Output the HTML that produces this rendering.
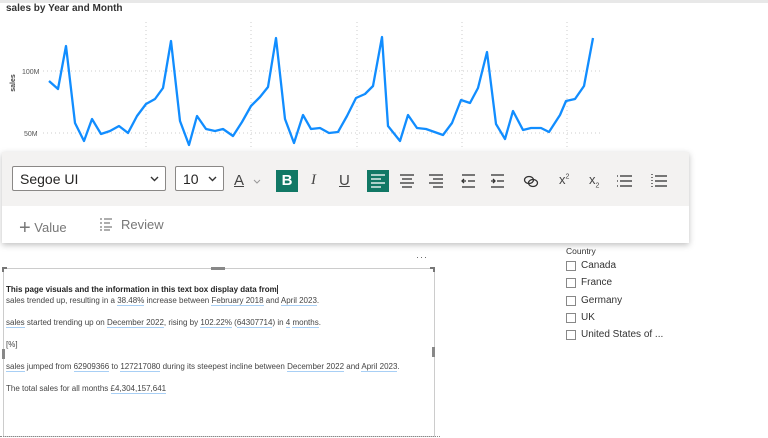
<!DOCTYPE html>
<html><head><meta charset="utf-8"><style>
*{margin:0;padding:0;box-sizing:border-box}
body{width:768px;height:438px;background:#fff;position:relative;overflow:hidden;font-family:"Liberation Sans",sans-serif;color:#252423}
.abs{position:absolute}
.u{border-bottom:1px solid #a8cff5}
.tb{font-size:8px;line-height:11px;color:#444}
.ic{position:absolute;top:172px;font-size:15px;color:#444}
.cb{position:absolute;left:566px;width:10px;height:10px;border:1px solid #888;background:#fff}
.cl{position:absolute;left:581px;font-size:10px;color:#333}
</style></head><body>
<div class="abs" style="left:0;top:0;width:768px;height:3px;background:#e8e8e8"></div>
<div class="abs" style="left:6px;top:3px;font-size:10px;font-weight:bold;color:#333">sales by Year and Month</div>
<svg class="abs" style="left:0;top:0" width="768" height="160">
<g stroke="#ccc" stroke-dasharray="1,3" stroke-width="1">
<line x1="43" y1="71" x2="600" y2="71"/><line x1="43" y1="133" x2="600" y2="133"/>
<line x1="146" y1="22" x2="146" y2="150"/><line x1="251" y1="22" x2="251" y2="150"/><line x1="357" y1="22" x2="357" y2="150"/><line x1="462" y1="22" x2="462" y2="150"/><line x1="567" y1="22" x2="567" y2="150"/>
</g>
<text x="22" y="74" font-size="7" fill="#555" font-family="Liberation Sans">100M</text>
<text x="24" y="136" font-size="7" fill="#555" font-family="Liberation Sans">50M</text>
<text x="15" y="83" font-size="7" font-weight="bold" fill="#444" font-family="Liberation Sans" transform="rotate(-90 15 83)" text-anchor="middle">sales</text>
<polyline fill="none" stroke="#118dff" stroke-width="2.3" stroke-linejoin="round" points="49,81 58,89 66,46 75,123 84,141 92,119 101,134 110,131 119,126 128,133 137,116 146,104 155,99 163,88 171,41 180,121 189,145 197,116 206,129 215,131 223,129 233,136 242,122 251,106 260,97 268,87 276,38 285,119 294,143 303,115 311,129 320,128 329,133 338,132 347,116 356,98 365,94 373,86 382,37 388,126 400,141 408,115 417,128 426,129 443,135 452,123 461,100 470,103 478,88 487,52 496,124 505,139 513,111 523,130 531,128 541,128 549,132 560,115 566,101 575,99 584,86 593,38"/>
</svg>
<div class="abs" style="left:2px;top:152px;width:687px;height:91px;background:#fff;box-shadow:0 2px 6px rgba(0,0,0,.25)">
<div style="height:54px;background:#f3f2f1"></div>
</div>
<div class="abs" style="left:12px;top:166px;width:154px;height:25px;border:1px solid #8a8886;background:#fff;border-radius:2px;font-size:14px;padding:4px 7px">Segoe UI<svg style="position:absolute;right:6px;top:9px" width="9" height="6"><path d="M1 1l3.5 3.5L8 1" fill="none" stroke="#333" stroke-width="1.4"/></svg></div>
<div class="abs" style="left:175px;top:166px;width:49px;height:25px;border:1px solid #8a8886;background:#fff;border-radius:2px;font-size:14px;padding:4px 7px">10<svg style="position:absolute;right:6px;top:9px" width="9" height="6"><path d="M1 1l3.5 3.5L8 1" fill="none" stroke="#333" stroke-width="1.4"/></svg></div>
<div class="ic" style="left:234px;text-decoration:underline">A</div><svg class="abs" style="left:253px;top:179px" width="8" height="5"><path d="M1 1l3 3 3-3" fill="none" stroke="#999" stroke-width="1"/></svg>
<div class="abs" style="left:276px;top:170px;width:22px;height:22px;background:#117865;color:#fff;font-weight:bold;font-size:15px;text-align:center;line-height:22px">B</div>
<div class="ic" style="left:311px;font-style:italic;font-family:'Liberation Serif',serif">I</div>
<div class="ic" style="left:339px;text-decoration:underline">U</div>
<svg class="abs" style="left:367px;top:170px" width="320" height="22" stroke="#333" stroke-width="1.3" fill="none">
<rect x="0" y="0" width="22" height="22" fill="#117865" stroke="none"/>
<g stroke="#fff"><line x1="4" y1="5" x2="18" y2="5"/><line x1="4" y1="9" x2="14" y2="9"/><line x1="4" y1="13" x2="18" y2="13"/><line x1="4" y1="17" x2="14" y2="17"/></g>
<line x1="33" y1="5" x2="47" y2="5"/><line x1="35" y1="9" x2="45" y2="9"/><line x1="33" y1="13" x2="47" y2="13"/><line x1="35" y1="17" x2="45" y2="17"/>
<line x1="62" y1="5" x2="76" y2="5"/><line x1="66" y1="9" x2="76" y2="9"/><line x1="62" y1="13" x2="76" y2="13"/><line x1="66" y1="17" x2="76" y2="17"/>
<line x1="95" y1="5" x2="108" y2="5"/><line x1="101" y1="11" x2="108" y2="11"/><line x1="95" y1="17" x2="108" y2="17"/><path d="M99 11h-4m2-2l-2 2 2 2"/>
<line x1="124" y1="5" x2="137" y2="5"/><line x1="130" y1="11" x2="137" y2="11"/><line x1="124" y1="17" x2="137" y2="17"/><path d="M124 11h4m-2-2l2 2-2 2"/>
<ellipse cx="162" cy="10" rx="4.5" ry="3.5"/><ellipse cx="166" cy="13" rx="4.5" ry="3.5"/>
<line x1="253" y1="6" x2="265" y2="6"/><line x1="253" y1="11" x2="265" y2="11"/><line x1="253" y1="16" x2="265" y2="16"/><line x1="250" y1="6" x2="251" y2="6"/><line x1="250" y1="11" x2="251" y2="11"/><line x1="250" y1="16" x2="251" y2="16"/>
<line x1="288" y1="6" x2="300" y2="6"/><line x1="288" y1="11" x2="300" y2="11"/><line x1="288" y1="16" x2="300" y2="16"/><line x1="285" y1="4" x2="285" y2="18" stroke-dasharray="1,2"/>
</svg>
<div class="abs" style="left:559px;top:172px;font-size:13px;color:#444">x<sup style="font-size:7px">2</sup></div>
<div class="abs" style="left:589px;top:172px;font-size:13px;color:#444">x<sub style="font-size:7px">2</sub></div>
<div class="abs" style="left:19px;top:215px;font-size:13px;color:#777"><span style="font-size:20px;position:relative;top:2px;font-weight:300">+</span> Value</div>
<svg class="abs" style="left:99px;top:217px" width="14" height="14" stroke="#777" stroke-width="1.2"><line x1="1" y1="2" x2="3" y2="2"/><line x1="1" y1="6" x2="3" y2="6"/><line x1="1" y1="10" x2="3" y2="10"/><line x1="1" y1="13" x2="3" y2="13"/><line x1="5" y1="2" x2="13" y2="2"/><line x1="5" y1="6" x2="11" y2="6"/><line x1="5" y1="10" x2="13" y2="10"/><line x1="5" y1="13" x2="11" y2="13"/></svg>
<div class="abs" style="left:121px;top:217px;font-size:13px;color:#777">Review</div>
<div class="abs" style="left:416px;top:252px;font-size:9px;color:#555;letter-spacing:1px">&middot;&middot;&middot;</div>
<div class="abs" style="left:3px;top:268px;width:432px;height:169px;border:1px solid #ccc"></div>
<div class="abs" style="left:2px;top:267px;width:5px;height:5px;border-left:2px solid #777;border-top:2px solid #777"></div>
<div class="abs" style="left:430px;top:267px;width:5px;height:5px;border-right:2px solid #777;border-top:2px solid #777"></div>
<div class="abs" style="left:211px;top:267px;width:14px;height:3px;background:#888"></div>
<div class="abs" style="left:2px;top:349px;width:3px;height:10px;background:#888"></div>
<div class="abs" style="left:432px;top:347px;width:3px;height:10px;background:#888"></div>
<div class="abs" style="left:0;top:436px;width:440px;height:2px;border-top:1px dotted #888"></div>
<div class="abs tb" style="left:6px;top:284px;font-weight:bold;color:#222">This page visuals and the information in this text box display data from <span style="border-left:1px solid #333"></span></div>
<div class="abs tb" style="left:6px;top:295px">sales trended up, resulting in a <span class="u">38.48%</span> increase between <span class="u">February 2018</span> and <span class="u">April 2023</span>.</div>
<div class="abs tb" style="left:6px;top:317px"><span class="u">sales</span> started trending up on <span class="u">December 2022</span>, rising by <span class="u">102.22%</span> (<span class="u">64307714</span>) in <span class="u">4</span> <span class="u">months</span>.</div>
<div class="abs tb" style="left:6px;top:339px">[%]</div>
<div class="abs tb" style="left:6px;top:361px"><span class="u">sales</span> jumped from <span class="u">62909366</span> to <span class="u">127217080</span> during its steepest incline between <span class="u">December 2022</span> and <span class="u">April 2023</span>.</div>
<div class="abs tb" style="left:6px;top:383px">The total sales for all months <span class="u">£4,304,157,641</span></div>
<div class="abs" style="left:566px;top:246px;font-size:8.5px;color:#333">Country</div>
<div class="cb" style="top:261px"></div><div class="cl" style="top:260px">Canada</div>
<div class="cb" style="top:278px"></div><div class="cl" style="top:277px">France</div>
<div class="cb" style="top:296px"></div><div class="cl" style="top:295px">Germany</div>
<div class="cb" style="top:313px"></div><div class="cl" style="top:312px">UK</div>
<div class="cb" style="top:330px"></div><div class="cl" style="top:329px">United States of ...</div>
</body></html>
